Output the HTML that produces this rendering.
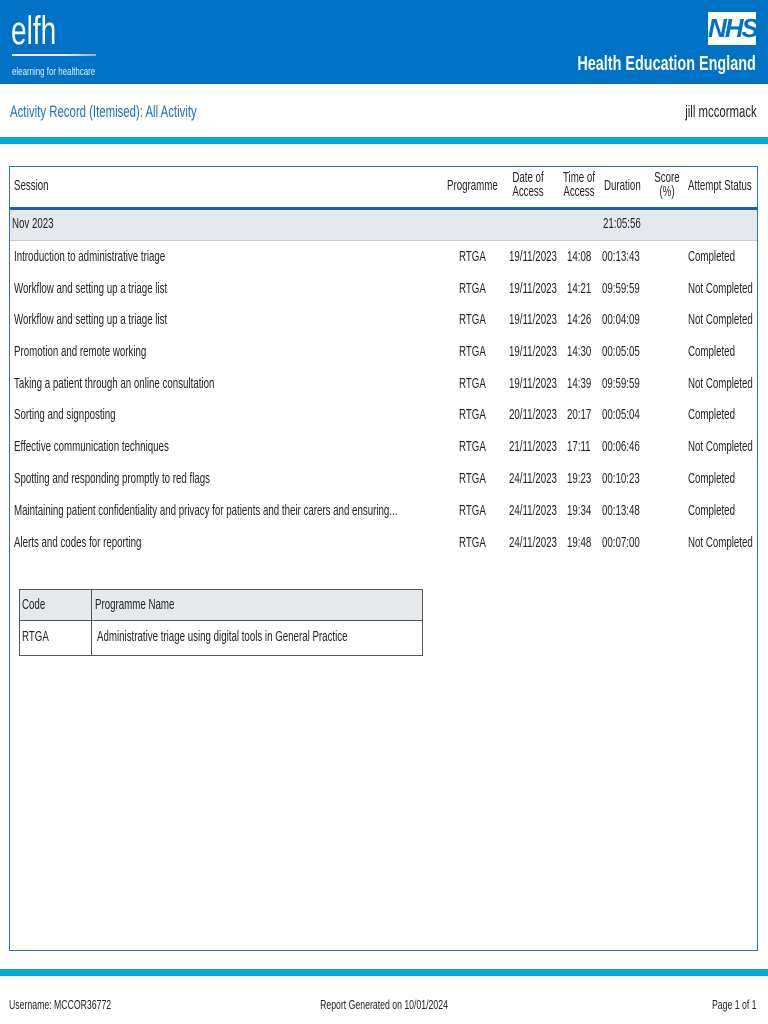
<!DOCTYPE html>
<html><head><meta charset="utf-8"><style>
*{margin:0;padding:0;box-sizing:border-box}
body{width:768px;height:1024px;position:relative;background:#fff;font-family:"Liberation Sans",Arial,sans-serif;color:#222;overflow:hidden}
.t{position:absolute;white-space:nowrap;font-size:14.5px;line-height:16px;transform:scaleX(.67);transform-origin:left top}
.r{position:absolute;white-space:nowrap;font-size:14.5px;line-height:16px;transform:scaleX(.67);transform-origin:right top;text-align:right}
.c{position:absolute;white-space:nowrap;font-size:14.5px;line-height:14px;transform:scaleX(.67);transform-origin:center top;text-align:center}
</style></head><body>
<div style="position:absolute;left:0;top:0;width:768px;height:84px;background:#0072c6"></div>
<div class="t" style="left:11px;top:10px;font-size:40px;line-height:42px;color:#fff;transform:scaleX(.7)">elfh</div>
<div style="position:absolute;left:12px;top:54px;width:84px;height:2px;background:linear-gradient(90deg,#e6eef8 65%,#7fb0e0)"></div>
<div class="t" style="left:12px;top:66px;font-size:11px;line-height:13px;color:#e6eef8;transform:scaleX(.72)">elearning for healthcare</div>
<div style="position:absolute;left:708px;top:12px;width:48px;height:33px;background:#fff;overflow:hidden;color:#0072c6;font-weight:bold;font-style:italic;font-size:26px;line-height:33px;text-align:center;letter-spacing:-2px;padding-right:3px">NHS</div>
<div class="r" style="right:12px;top:52px;font-size:20px;line-height:24px;color:#fff;font-weight:bold;transform:scaleX(.72)">Health Education England</div>
<div class="t" style="left:10px;top:102px;font-size:17px;line-height:20px;color:#1a6fc0">Activity Record (Itemised): All Activity</div>
<div class="r" style="right:11px;top:102px;font-size:17px;line-height:20px;color:#222">jill mccormack</div>
<div style="position:absolute;left:0;top:137px;width:768px;height:7px;background:#00a9d4"></div>

<div style="position:absolute;left:9px;top:166px;width:749px;height:785px;border:1px solid #2a73c4"></div>
<div style="position:absolute;left:10px;top:207px;width:747px;height:3px;background:#1f5fb0"></div>
<div style="position:absolute;left:10px;top:210px;width:747px;height:31px;background:#e6e9eb;border-bottom:1px solid #c8cbce"></div>

<div class="t" style="left:14px;top:178px">Session</div>
<div class="r" style="right:270px;top:178px">Programme</div>
<div class="c" style="left:498px;width:60px;top:171px">Date of<br>Access</div>
<div class="c" style="left:549px;width:60px;top:171px">Time of<br>Access</div>
<div class="t" style="left:604px;top:178px">Duration</div>
<div class="c" style="left:637px;width:60px;top:171px">Score<br>(%)</div>
<div class="t" style="left:688px;top:178px">Attempt Status</div>

<div class="t" style="left:12px;top:216px">Nov 2023</div>
<div class="t" style="left:603px;top:216px">21:05:56</div>

<div class="t" style="left:14px;top:249px">Introduction to administrative triage</div>
<div class="t" style="left:14px;top:281px">Workflow and setting up a triage list</div>
<div class="t" style="left:14px;top:312px">Workflow and setting up a triage list</div>
<div class="t" style="left:14px;top:344px">Promotion and remote working</div>
<div class="t" style="left:14px;top:376px">Taking a patient through an online consultation</div>
<div class="t" style="left:14px;top:407px">Sorting and signposting</div>
<div class="t" style="left:14px;top:439px">Effective communication techniques</div>
<div class="t" style="left:14px;top:471px">Spotting and responding promptly to red flags</div>
<div class="t" style="left:14px;top:503px">Maintaining patient confidentiality and privacy for patients and their carers and ensuring...</div>
<div class="t" style="left:14px;top:535px">Alerts and codes for reporting</div>

<div class="t" style="left:459px;top:249px">RTGA</div><div class="t" style="left:509px;top:249px">19/11/2023</div><div class="t" style="left:567px;top:249px">14:08</div><div class="t" style="left:602px;top:249px">00:13:43</div><div class="t" style="left:688px;top:249px">Completed</div>
<div class="t" style="left:459px;top:281px">RTGA</div><div class="t" style="left:509px;top:281px">19/11/2023</div><div class="t" style="left:567px;top:281px">14:21</div><div class="t" style="left:602px;top:281px">09:59:59</div><div class="t" style="left:688px;top:281px">Not Completed</div>
<div class="t" style="left:459px;top:312px">RTGA</div><div class="t" style="left:509px;top:312px">19/11/2023</div><div class="t" style="left:567px;top:312px">14:26</div><div class="t" style="left:602px;top:312px">00:04:09</div><div class="t" style="left:688px;top:312px">Not Completed</div>
<div class="t" style="left:459px;top:344px">RTGA</div><div class="t" style="left:509px;top:344px">19/11/2023</div><div class="t" style="left:567px;top:344px">14:30</div><div class="t" style="left:602px;top:344px">00:05:05</div><div class="t" style="left:688px;top:344px">Completed</div>
<div class="t" style="left:459px;top:376px">RTGA</div><div class="t" style="left:509px;top:376px">19/11/2023</div><div class="t" style="left:567px;top:376px">14:39</div><div class="t" style="left:602px;top:376px">09:59:59</div><div class="t" style="left:688px;top:376px">Not Completed</div>
<div class="t" style="left:459px;top:407px">RTGA</div><div class="t" style="left:509px;top:407px">20/11/2023</div><div class="t" style="left:567px;top:407px">20:17</div><div class="t" style="left:602px;top:407px">00:05:04</div><div class="t" style="left:688px;top:407px">Completed</div>
<div class="t" style="left:459px;top:439px">RTGA</div><div class="t" style="left:509px;top:439px">21/11/2023</div><div class="t" style="left:567px;top:439px">17:11</div><div class="t" style="left:602px;top:439px">00:06:46</div><div class="t" style="left:688px;top:439px">Not Completed</div>
<div class="t" style="left:459px;top:471px">RTGA</div><div class="t" style="left:509px;top:471px">24/11/2023</div><div class="t" style="left:567px;top:471px">19:23</div><div class="t" style="left:602px;top:471px">00:10:23</div><div class="t" style="left:688px;top:471px">Completed</div>
<div class="t" style="left:459px;top:503px">RTGA</div><div class="t" style="left:509px;top:503px">24/11/2023</div><div class="t" style="left:567px;top:503px">19:34</div><div class="t" style="left:602px;top:503px">00:13:48</div><div class="t" style="left:688px;top:503px">Completed</div>
<div class="t" style="left:459px;top:535px">RTGA</div><div class="t" style="left:509px;top:535px">24/11/2023</div><div class="t" style="left:567px;top:535px">19:48</div><div class="t" style="left:602px;top:535px">00:07:00</div><div class="t" style="left:688px;top:535px">Not Completed</div>

<div style="position:absolute;left:19px;top:589px;width:404px;height:67px;border:1px solid #555"></div>
<div style="position:absolute;left:20px;top:590px;width:402px;height:31px;background:#e6e9eb;border-bottom:1px solid #555"></div>
<div style="position:absolute;left:91px;top:590px;width:1px;height:65px;background:#555"></div>
<div class="t" style="left:22px;top:597px">Code</div>
<div class="t" style="left:95px;top:597px">Programme Name</div>
<div class="t" style="left:22px;top:629px">RTGA</div>
<div class="t" style="left:97px;top:629px">Administrative triage using digital tools in General Practice</div>

<div style="position:absolute;left:0;top:969px;width:768px;height:7px;background:#00a9d4"></div>
<div class="t" style="left:9px;top:997px;font-size:13px">Username: MCCOR36772</div>
<div class="c" style="left:284px;width:200px;top:998px;font-size:13px">Report Generated on 10/01/2024</div>
<div class="r" style="right:12px;top:997px;font-size:13px">Page 1 of 1</div>
</body></html>
